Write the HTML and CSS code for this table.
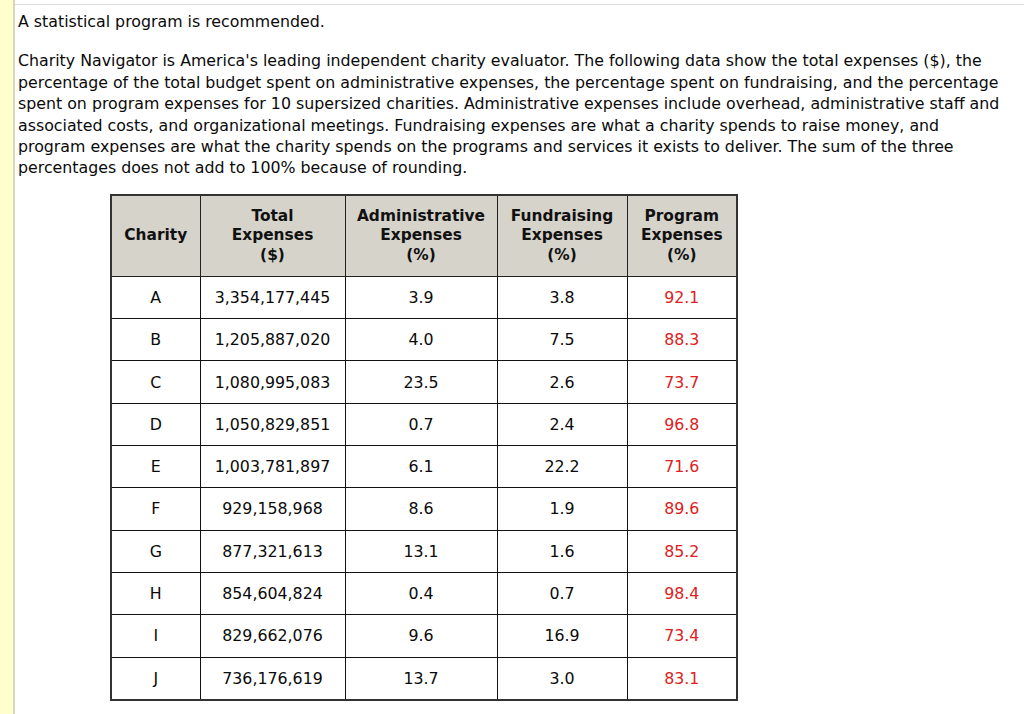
FILE: index.html
```html
<!DOCTYPE html>
<html>
<head>
<meta charset="utf-8">
<link rel="stylesheet" href="styles.css">
</head>
<body>
<div class="page">
  <div class="strip"></div>
  <div class="content">
    <p class="lead">A statistical program is recommended.</p>
    <p class="desc">Charity Navigator is America's leading independent charity evaluator. The following data show the total expenses ($), the<br>percentage of the total budget spent on administrative expenses, the percentage spent on fundraising, and the percentage<br>spent on program expenses for 10 supersized charities. Administrative expenses include overhead, administrative staff and<br>associated costs, and organizational meetings. Fundraising expenses are what a charity spends to raise money, and<br>program expenses are what the charity spends on the programs and services it exists to deliver. The sum of the three<br>percentages does not add to 100% because of rounding.</p>
    <div class="table-wrap">
      <table class="data">
        <colgroup>
          <col class="c1"><col class="c2"><col class="c3"><col class="c4"><col class="c5">
        </colgroup>
        <thead>
          <tr>
            <th>Charity</th>
            <th>Total<br>Expenses<br>($)</th>
            <th>Administrative<br>Expenses<br>(%)</th>
            <th>Fundraising<br>Expenses<br>(%)</th>
            <th>Program<br>Expenses<br>(%)</th>
          </tr>
        </thead>
        <tbody>
          <tr><td>A</td><td>3,354,177,445</td><td>3.9</td><td>3.8</td><td class="red">92.1</td></tr>
          <tr><td>B</td><td>1,205,887,020</td><td>4.0</td><td>7.5</td><td class="red">88.3</td></tr>
          <tr><td>C</td><td>1,080,995,083</td><td>23.5</td><td>2.6</td><td class="red">73.7</td></tr>
          <tr><td>D</td><td>1,050,829,851</td><td>0.7</td><td>2.4</td><td class="red">96.8</td></tr>
          <tr><td>E</td><td>1,003,781,897</td><td>6.1</td><td>22.2</td><td class="red">71.6</td></tr>
          <tr><td>F</td><td>929,158,968</td><td>8.6</td><td>1.9</td><td class="red">89.6</td></tr>
          <tr><td>G</td><td>877,321,613</td><td>13.1</td><td>1.6</td><td class="red">85.2</td></tr>
          <tr><td>H</td><td>854,604,824</td><td>0.4</td><td>0.7</td><td class="red">98.4</td></tr>
          <tr><td>I</td><td>829,662,076</td><td>9.6</td><td>16.9</td><td class="red">73.4</td></tr>
          <tr><td>J</td><td>736,176,619</td><td>13.7</td><td>3.0</td><td class="red">83.1</td></tr>
        </tbody>
      </table>
    </div>
  </div>
</div>
</body>
</html>
```
FILE: styles.css
```css
html, body {
  margin: 0;
  padding: 0;
  background: #ffffff;
}
body {
  font-family: "DejaVu Sans", Verdana, sans-serif;
  font-size: 15.8px;
  color: #0a0a0a;
}
.page {
  display: flex;
  min-height: 714px;
}
.strip {
  width: 13px;
  flex: none;
  background: #ffffcc;
  border-right: 2px solid #d9d6c0;
}
.content {
  flex: 1;
  margin-top: 4px;
  border-top: 1px solid #dedede;
  padding: 0 0 0 3px;
  white-space: nowrap;
}
.lead {
  margin: 6px 0 0 0;
  line-height: 21.4px;
}
.desc {
  margin: 18px 0 0 0;
  line-height: 21.4px;
}
.table-wrap {
  padding: 15px 0 0 92px;
}
.data {
  border-collapse: collapse;
  border: 2px solid #333;
  text-align: center;
}
.c1 { width: 89px; }
.c2 { width: 145px; }
.c3 { width: 152px; }
.c4 { width: 130px; }
.c5 { width: 110px; }
.data th {
  background: #d6d3ca;
  border: 1px solid #222;
  font-weight: bold;
  font-size: 15.4px;
  line-height: 19.5px;
  height: 80px;
  padding: 0 2px;
  color: #111;
}
.data td {
  border: 1px solid #111;
  height: 41.3px;
  padding: 0 2px;
}
.data td.red {
  color: #e02020;
}
```
